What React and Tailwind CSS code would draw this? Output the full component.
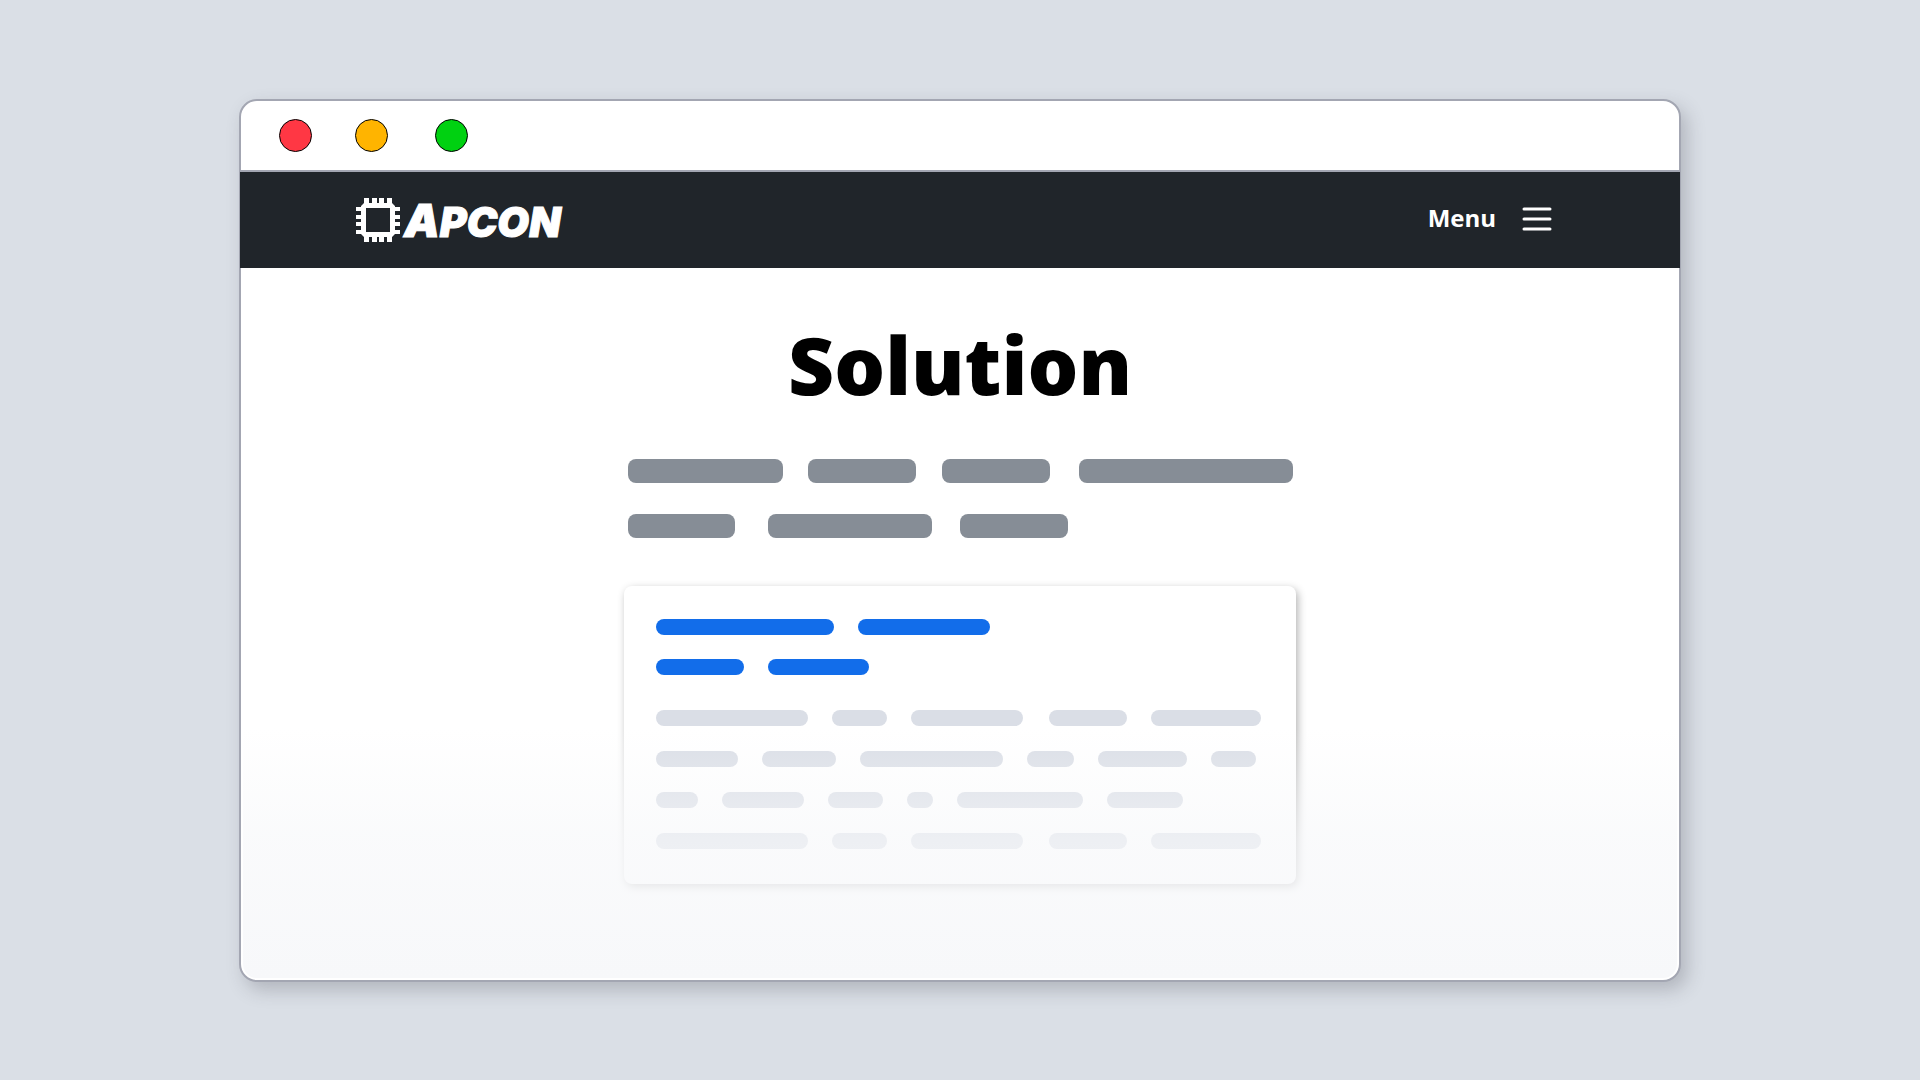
const introRows = [
  ["w-[155px]", "ml-[25px] w-[108px]", "ml-[26px] w-[108px]", "ml-[29px] w-[214px]"],
  ["w-[107px]", "ml-[33px] w-[164px]", "ml-[28px] w-[108px]"],
];

const titleRows = [
  ["w-[178px]", "w-[132px]"],
  ["w-[88px]", "w-[101px]"],
];

const bodyRows = [
  ["w-[152px]", "w-[55px]", "w-[112px]", "ml-[2px] w-[78px]", "w-[110px]"],
  ["w-[82px]", "w-[74px]", "w-[143px]", "w-[47px]", "w-[89px]", "w-[45px]"],
  ["w-[42px]", "w-[82px]", "w-[55px]", "w-[26px]", "w-[126px]", "w-[76px]"],
  ["w-[152px]", "w-[55px]", "w-[112px]", "ml-[2px] w-[78px]", "w-[110px]"],
];

function Logo() {
  const pins = [8, 16, 23, 31];
  return (
    <svg className="h-16 w-[224px]" viewBox="0 -9 224 64" fill="#fff" role="img" aria-label="APCON">
      <path
        fillRule="evenodd"
        d="M8 6H36L39 9V37L36 40H8L5 37V9ZM10 11V35H34V11Z"
      />
      {pins.map((p) => (
        <g key={p}>
          <rect x={p} y="1" width="5" height="6" />
          <rect x={p} y="39" width="5" height="6" />
          <rect x="0" y={p + 2} width="6" height="4" />
          <rect x="38" y={p + 2} width="6" height="4" />
        </g>
      ))}
      <text
        x="48"
        y="40"
        fontFamily="Inter, 'Liberation Sans', sans-serif"
        fontWeight="900"
        fontStyle="italic"
        stroke="#fff"
        strokeWidth="1"
      >
        <tspan fontSize="45">A</tspan>
        <tspan fontSize="41">PCON</tspan>
      </text>
    </svg>
  );
}

function TitleBar() {
  return (
    <div className="flex h-[71px] items-center border-b-2 border-[#a3a6b2] pl-[38px]">
      <button type="button" aria-label="Close" className="size-[33px] rounded-full border border-black bg-[#ff3744]" />
      <button type="button" aria-label="Minimize" className="ml-[43px] size-[33px] rounded-full border border-black bg-[#ffb400]" />
      <button type="button" aria-label="Maximize" className="ml-[47px] size-[33px] rounded-full border border-black bg-[#00d111]" />
    </div>
  );
}

function NavBar() {
  return (
    <header className="-mx-px flex h-24 items-center justify-between bg-[#20252a] pr-32 pl-[116px]">
      <a href="#">
        <Logo />
      </a>
      <button type="button" className="flex items-center gap-[26px] text-2xl font-bold text-white">
        <span className="pb-1">Menu</span>
        <svg className="mb-0.5 h-6 w-[30px]" viewBox="0 0 30 24" stroke="#fff" strokeWidth="3" strokeLinecap="round" aria-hidden="true">
          <path d="M2 2H28M2 12H28M2 22H28" />
        </svg>
      </button>
    </header>
  );
}

function Bars({ items, className, barClassName }) {
  return (
    <div className={`flex ${className || ""}`}>
      {items.map((item, i) => (
        <span key={i} className={`${barClassName} ${item}`} />
      ))}
    </div>
  );
}

export default function App() {
  return (
    <div className="flex min-h-screen items-center justify-center bg-[#dadfe6] font-['Open_Sans',sans-serif]">
      <div className="w-[calc(75%+2px)] rounded-[18px] border-2 border-[#a3a6b2] bg-white shadow-[6px_8px_18px_rgba(60,60,70,0.25)]">
        <TitleBar />
        <NavBar />

        <main className="relative flex flex-col items-center pt-[42px] pb-24">
          <h1 className="text-[80px] leading-[108px] font-extrabold text-black">Solution</h1>

          <div className="mt-[41px] flex w-[665px] flex-col gap-[31px]">
            {introRows.map((row, i) => (
              <Bars key={i} items={row} barClassName="h-6 rounded-lg bg-[#868d96]" />
            ))}
          </div>

          <section className="mt-12 w-[672px] rounded-lg bg-white px-8 pt-[33px] pb-[35px] shadow-[2px_3px_8px_rgba(0,0,0,0.3)]">
            <div className="flex flex-col gap-6">
              {titleRows.map((row, i) => (
                <Bars key={i} items={row} className="gap-6" barClassName="h-4 rounded-full bg-[#126dea]" />
              ))}
            </div>
            <div className="mt-[35px] flex flex-col gap-[25px]">
              {bodyRows.map((row, i) => (
                <Bars key={i} items={row} className="gap-6" barClassName="h-4 rounded-full bg-[#dadee6]" />
              ))}
            </div>
          </section>

          {/* fade out towards the bottom of the page */}
          <div className="pointer-events-none absolute inset-x-0.5 bottom-0.5 h-[250px] rounded-b-[14px] bg-linear-to-b from-[#f7f8fa]/0 via-[#f7f8fa]/65 via-44% to-[#f7f8fa]" />
        </main>
      </div>
    </div>
  );
}
